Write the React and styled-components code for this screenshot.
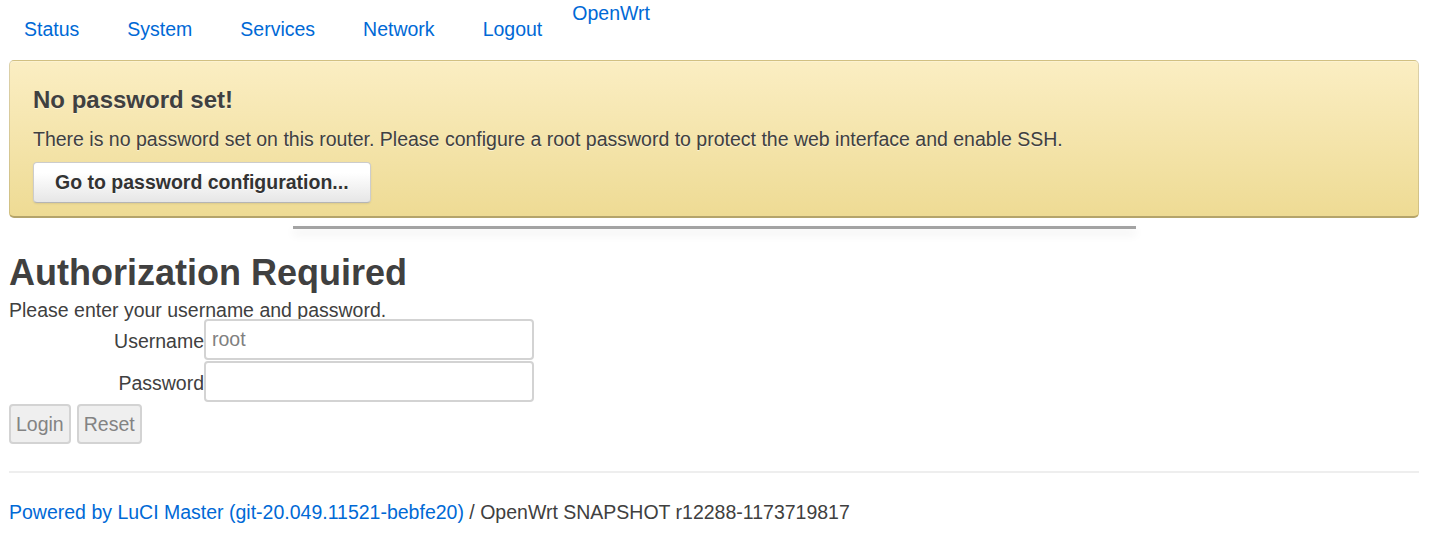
import React from "react";
import styled, { createGlobalStyle } from "styled-components";

const Global = createGlobalStyle`
  html, body { margin: 0; padding: 0; background: #fff; }
  body {
    font-family: "Liberation Sans", Arial, Helvetica, sans-serif;
    font-size: 19.5px;
    color: #404040;
  }
  * { box-sizing: border-box; }
`;

const Header = styled.header`
  display: flex;
  align-items: flex-start;
  height: 60px;
`;

const NavList = styled.ul`
  display: flex;
  list-style: none;
  margin: 0;
  padding: 0;
`;

const NavItem = styled.li`
  padding: 18px 24px 0;
  line-height: 22px;
`;

const Link = styled.a`
  color: #0069d6;
  text-decoration: none;
`;

const Brand = styled.a`
  color: #0069d6;
  text-decoration: none;
  line-height: 22px;
  padding-top: 2px;
  margin-left: 6px;
`;

const Main = styled.main`
  padding: 0 10px 0 9px;
`;

const Alert = styled.div`
  padding: 25px 23px 13px;
  border: 1px solid rgba(0, 0, 0, 0.12);
  border-bottom: 2px solid rgba(110, 90, 20, 0.5);
  border-radius: 5px;
  background: linear-gradient(to bottom, #fbeec3, #eedb94);
  text-shadow: 0 1px 0 rgba(255, 255, 255, 0.5);
  box-shadow: inset 0 1px 0 rgba(255, 255, 255, 0.25);
`;

const AlertTitle = styled.h4`
  margin: 0;
  font-size: 24px;
  line-height: 28px;
  font-weight: bold;
`;

const AlertText = styled.p`
  margin: 14px 0 0;
  line-height: 22px;
`;

const Button = styled.button`
  margin-top: 12px;
  height: 41px;
  padding: 0 21px;
  font-family: inherit;
  font-size: 19.5px;
  font-weight: bold;
  color: #333;
  border: 1px solid #ccc;
  border-bottom-color: #b5b5b5;
  border-radius: 4px;
  background: linear-gradient(to bottom, #ffffff 0%, #ffffff 25%, #e6e6e6 100%);
  box-shadow: inset 0 1px 0 rgba(255, 255, 255, 0.2), 0 1px 2px rgba(0, 0, 0, 0.08);
  text-shadow: 0 1px 1px rgba(255, 255, 255, 0.75);
`;

const Bar = styled.div`
  width: 843px;
  height: 3px;
  margin: 8px auto 0;
  background: #a3a3a3;
  box-shadow: 0 5px 10px rgba(0, 0, 0, 0.1);
`;

const Title = styled.h2`
  margin: 23px 0 0;
  font-size: 36px;
  line-height: 41px;
  font-weight: bold;
`;

const Intro = styled.p`
  margin: 8px 0 0;
  line-height: 18px;
`;

const Form = styled.form`
  display: flex;
  flex-direction: column;
  gap: 1px;
  margin-top: 0;
`;

const Row = styled.div`
  display: flex;
  align-items: center;
`;

const Label = styled.label`
  width: 195px;
  text-align: right;
  padding-top: 3px;
`;

const Input = styled.input`
  width: 330px;
  height: 41px;
  padding: 0 6px;
  font-family: inherit;
  font-size: 19.5px;
  color: #404040;
  border: 2px solid #d3d3d3;
  border-radius: 4px;
  background: #fff;
  outline: none;
  &::placeholder { color: #808080; }
`;

const Actions = styled.div`
  display: flex;
  gap: 6px;
  margin-top: 1px;
`;

const FormButton = styled.button`
  height: 40px;
  padding: 0 ${(p) => p.$px}px;
  font-family: inherit;
  font-size: 19.5px;
  color: #838383;
  background: #efefef;
  border: 2px solid #d3d3d3;
  border-radius: 4px;
`;

const Rule = styled.hr`
  margin: 27px 0 0;
  border: 0;
  border-top: 2px solid #eeeeee;
`;

const Footer = styled.footer`
  margin-top: 28px;
  line-height: 22px;
`;

export default function App() {
  const nav = ["Status", "System", "Services", "Network", "Logout"];
  return (
    <>
      <Global />
      <Header>
        <NavList>
          {nav.map((n) => (
            <NavItem key={n}>
              <Link href="#">{n}</Link>
            </NavItem>
          ))}
        </NavList>
        <Brand href="#">OpenWrt</Brand>
      </Header>
      <Main>
        <Alert>
          <AlertTitle>No password set!</AlertTitle>
          <AlertText>
            There is no password set on this router. Please configure a root password to protect the web interface and enable SSH.
          </AlertText>
          <Button type="button">Go to password configuration...</Button>
        </Alert>
        <Bar />
        <Title>Authorization Required</Title>
        <Intro>Please enter your username and password.</Intro>
        <Form onSubmit={(e) => e.preventDefault()}>
          <Row>
            <Label>Username</Label>
            <Input type="text" placeholder="root" />
          </Row>
          <Row>
            <Label>Password</Label>
            <Input type="password" />
          </Row>
          <Actions>
            <FormButton type="submit" $px={5}>Login</FormButton>
            <FormButton type="reset" $px={5}>Reset</FormButton>
          </Actions>
        </Form>
        <Rule />
        <Footer>
          <Link href="#">Powered by LuCI Master (git-20.049.11521-bebfe20)</Link> / OpenWrt SNAPSHOT r12288-1173719817
        </Footer>
      </Main>
    </>
  );
}
